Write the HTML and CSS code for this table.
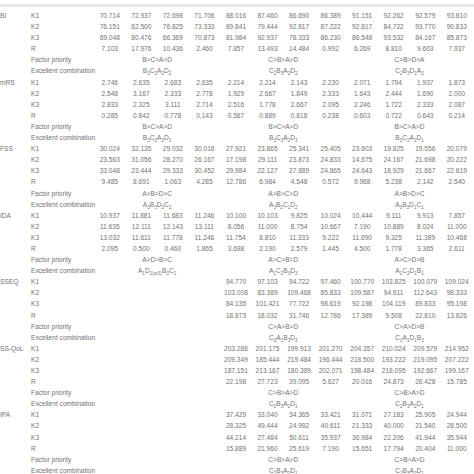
FILE: index.html
```html
<!DOCTYPE html>
<html lang="en">
<head>
<meta charset="utf-8">
<title>Orthogonal analysis table</title>
<link rel="stylesheet" href="styles.css">
</head>
<body>
<div class="sheet">
  <div class="rule"></div>
  <div class="tbl">
    <div class="row"><span class="lab">BI</span><span class="fac">K1</span><span>70.714</span><span>72.937</span><span>72.698</span><span>71.706</span><span>88.016</span><span>87.460</span><span>86.690</span><span>86.389</span><span>91.151</span><span>92.262</span><span>92.579</span><span>93.810</span></div>
    <div class="row"><span class="lab"></span><span class="fac">K2</span><span>76.151</span><span>62.500</span><span>76.825</span><span>73.333</span><span>89.841</span><span>79.444</span><span>92.817</span><span>87.222</span><span>92.817</span><span>84.722</span><span>93.770</span><span>90.833</span></div>
    <div class="row"><span class="lab"></span><span class="fac">K3</span><span>69.048</span><span>80.476</span><span>66.369</span><span>70.873</span><span>81.984</span><span>92.937</span><span>78.333</span><span>86.230</span><span>86.548</span><span>93.532</span><span>84.167</span><span>85.873</span></div>
    <div class="row"><span class="lab"></span><span class="fac">R</span><span>7.103</span><span>17.976</span><span>10.436</span><span>2.460</span><span>7.857</span><span>13.493</span><span>14.484</span><span>0.992</span><span>6.269</span><span>8.810</span><span>9.603</span><span>7.937</span></div>
    <div class="row"><span class="lab"></span><span class="fac">Factor priority</span><span class="g">B&gt;C&gt;A&gt;D</span><span class="g">C&gt;B&gt;A&gt;D</span><span class="g">C&gt;B&gt;D&gt;A</span></div>
    <div class="row"><span class="lab"></span><span class="fac">Excellent combination</span><span class="g">B<sub>3</sub>C<sub>2</sub>A<sub>2</sub>D<sub>2</sub></span><span class="g">C<sub>2</sub>B<sub>3</sub>A<sub>2</sub>D<sub>2</sub></span><span class="g">C<sub>2</sub>B<sub>3</sub>D<sub>1</sub>A<sub>2</sub></span></div>

    <div class="row"><span class="lab">mRS</span><span class="fac">K1</span><span>2.746</span><span>2.635</span><span>2.683</span><span>2.635</span><span>2.214</span><span>2.214</span><span>2.143</span><span>2.230</span><span>2.071</span><span>1.794</span><span>1.937</span><span>1.873</span></div>
    <div class="row"><span class="lab"></span><span class="fac">K2</span><span>2.548</span><span>3.167</span><span>2.333</span><span>2.778</span><span>1.929</span><span>2.667</span><span>1.849</span><span>2.333</span><span>1.643</span><span>2.444</span><span>1.690</span><span>2.000</span></div>
    <div class="row"><span class="lab"></span><span class="fac">K3</span><span>2.833</span><span>2.325</span><span>3.111</span><span>2.714</span><span>2.516</span><span>1.778</span><span>2.667</span><span>2.095</span><span>2.246</span><span>1.722</span><span>2.333</span><span>2.087</span></div>
    <div class="row"><span class="lab"></span><span class="fac">R</span><span>0.285</span><span>0.842</span><span>0.778</span><span>0.143</span><span>0.587</span><span>0.889</span><span>0.818</span><span>0.238</span><span>0.603</span><span>0.722</span><span>0.643</span><span>0.214</span></div>
    <div class="row"><span class="lab"></span><span class="fac">Factor priority</span><span class="g">B&gt;C&gt;A&gt;D</span><span class="g">B&gt;C&gt;A&gt;D</span><span class="g">B&gt;C&gt;A&gt;D</span></div>
    <div class="row"><span class="lab"></span><span class="fac">Excellent combination</span><span class="g">B<sub>3</sub>C<sub>2</sub>A<sub>2</sub>D<sub>1</sub></span><span class="g">B<sub>3</sub>C<sub>2</sub>A<sub>2</sub>D<sub>3</sub></span><span class="g">B<sub>3</sub>C<sub>2</sub>A<sub>2</sub>D<sub>1</sub></span></div>

    <div class="row"><span class="lab">FSS</span><span class="fac">K1</span><span>30.024</span><span>32.135</span><span>29.032</span><span>30.016</span><span>27.921</span><span>23.865</span><span>25.341</span><span>25.405</span><span>23.603</span><span>19.825</span><span>19.556</span><span>20.079</span></div>
    <div class="row"><span class="lab"></span><span class="fac">K2</span><span>23.563</span><span>31.056</span><span>28.270</span><span>26.167</span><span>17.198</span><span>29.111</span><span>23.873</span><span>24.833</span><span>14.675</span><span>24.167</span><span>21.698</span><span>20.222</span></div>
    <div class="row"><span class="lab"></span><span class="fac">K3</span><span>33.048</span><span>23.444</span><span>29.333</span><span>30.452</span><span>29.984</span><span>22.127</span><span>27.889</span><span>24.865</span><span>24.643</span><span>18.929</span><span>21.667</span><span>22.619</span></div>
    <div class="row"><span class="lab"></span><span class="fac">R</span><span>9.485</span><span>8.691</span><span>1.063</span><span>4.285</span><span>12.786</span><span>6.984</span><span>4.548</span><span>0.572</span><span>9.968</span><span>5.238</span><span>2.142</span><span>2.540</span></div>
    <div class="row"><span class="lab"></span><span class="fac">Factor priority</span><span class="g">A&gt;B&gt;D&gt;C</span><span class="g">A&gt;B&gt;C&gt;D</span><span class="g">A&gt;B&gt;D&gt;C</span></div>
    <div class="row"><span class="lab"></span><span class="fac">Excellent combination</span><span class="g">A<sub>3</sub>B<sub>3</sub>D<sub>2</sub>C<sub>2</sub></span><span class="g">A<sub>3</sub>B<sub>2</sub>C<sub>1</sub>D<sub>2</sub></span><span class="g">A<sub>3</sub>B<sub>3</sub>D<sub>1</sub>C<sub>1</sub></span></div>

    <div class="row"><span class="lab">IDA</span><span class="fac">K1</span><span>10.937</span><span>11.881</span><span>11.683</span><span>11.246</span><span>10.100</span><span>10.103</span><span>9.825</span><span>10.024</span><span>10.444</span><span>9.111</span><span>9.913</span><span>7.857</span></div>
    <div class="row"><span class="lab"></span><span class="fac">K2</span><span>11.635</span><span>12.111</span><span>12.143</span><span>13.111</span><span>8.056</span><span>11.000</span><span>8.754</span><span>10.667</span><span>7.190</span><span>10.889</span><span>8.024</span><span>11.000</span></div>
    <div class="row"><span class="lab"></span><span class="fac">K3</span><span>13.032</span><span>11.611</span><span>11.778</span><span>11.246</span><span>11.754</span><span>8.810</span><span>11.333</span><span>9.222</span><span>11.690</span><span>9.325</span><span>11.389</span><span>10.468</span></div>
    <div class="row"><span class="lab"></span><span class="fac">R</span><span>2.095</span><span>0.500</span><span>0.460</span><span>1.865</span><span>3.698</span><span>2.190</span><span>2.579</span><span>1.445</span><span>4.500</span><span>1.778</span><span>3.365</span><span>2.611</span></div>
    <div class="row"><span class="lab"></span><span class="fac">Factor priority</span><span class="g">A&gt;D&gt;B&gt;C</span><span class="g">A&gt;C&gt;B=D</span><span class="g">A&gt;C&gt;D&gt;B</span></div>
    <div class="row"><span class="lab"></span><span class="fac">Excellent combination</span><span class="g">A<sub>1</sub>D<sub>1(or3)</sub>B<sub>3</sub>C<sub>1</sub></span><span class="g">A<sub>1</sub>C<sub>2</sub>B<sub>3</sub>D<sub>3</sub></span><span class="g">A<sub>1</sub>C<sub>2</sub>D<sub>1</sub>B<sub>1</sub></span></div>

    <div class="row"><span class="lab">SSEQ</span><span class="fac">K1</span><span class="c5">94.770</span><span>97.103</span><span>94.722</span><span>97.460</span><span>100.770</span><span>103.825</span><span>100.079</span><span>109.024</span></div>
    <div class="row"><span class="lab"></span><span class="fac">K2</span><span class="c5">103.008</span><span>83.389</span><span>109.468</span><span>85.833</span><span>109.587</span><span>94.611</span><span>112.643</span><span>98.333</span></div>
    <div class="row"><span class="lab"></span><span class="fac">K3</span><span class="c5">84.135</span><span>101.421</span><span>77.722</span><span>98.619</span><span>92.198</span><span>104.119</span><span>89.833</span><span>95.198</span></div>
    <div class="row"><span class="lab"></span><span class="fac">R</span><span class="c5">18.873</span><span>18.032</span><span>31.746</span><span>12.786</span><span>17.389</span><span>9.508</span><span>22.810</span><span>13.826</span></div>
    <div class="row"><span class="lab"></span><span class="fac">Factor priority</span><span class="g c5">C&gt;A&gt;B&gt;D</span><span class="g">C&gt;A&gt;D&gt;B</span></div>
    <div class="row"><span class="lab"></span><span class="fac">Excellent combination</span><span class="g c5">C<sub>2</sub>A<sub>1</sub>B<sub>3</sub>D<sub>3</sub></span><span class="g">C<sub>2</sub>A<sub>1</sub>D<sub>1</sub>B<sub>3</sub></span></div>

    <div class="row"><span class="lab">SS-QoL</span><span class="fac">K1</span><span class="c5">203.286</span><span>201.175</span><span>199.913</span><span>201.270</span><span>204.357</span><span>210.024</span><span>209.579</span><span>214.952</span></div>
    <div class="row"><span class="lab"></span><span class="fac">K2</span><span class="c5">209.349</span><span>185.444</span><span>219.484</span><span>196.444</span><span>218.500</span><span>193.222</span><span>219.095</span><span>207.222</span></div>
    <div class="row"><span class="lab"></span><span class="fac">K3</span><span class="c5">187.151</span><span>213.167</span><span>180.389</span><span>202.071</span><span>198.484</span><span>218.095</span><span>192.667</span><span>199.167</span></div>
    <div class="row"><span class="lab"></span><span class="fac">R</span><span class="c5">22.198</span><span>27.723</span><span>39.095</span><span>5.627</span><span>20.016</span><span>24.873</span><span>26.428</span><span>15.785</span></div>
    <div class="row"><span class="lab"></span><span class="fac">Factor priority</span><span class="g c5">C&gt;B&gt;A&gt;D</span><span class="g">C&gt;B&gt;A&gt;D</span></div>
    <div class="row"><span class="lab"></span><span class="fac">Excellent combination</span><span class="g c5">C<sub>2</sub>B<sub>3</sub>A<sub>2</sub>D<sub>1</sub></span><span class="g">C<sub>2</sub>B<sub>3</sub>A<sub>2</sub>D<sub>1</sub></span></div>

    <div class="row"><span class="lab">IPA</span><span class="fac">K1</span><span class="c5">37.429</span><span>33.040</span><span>34.365</span><span>33.421</span><span>31.071</span><span>27.183</span><span>25.905</span><span>24.944</span></div>
    <div class="row"><span class="lab"></span><span class="fac">K2</span><span class="c5">28.325</span><span>49.444</span><span>24.992</span><span>40.611</span><span>21.333</span><span>40.000</span><span>21.540</span><span>28.500</span></div>
    <div class="row"><span class="lab"></span><span class="fac">K3</span><span class="c5">44.214</span><span>27.484</span><span>50.611</span><span>35.937</span><span>36.984</span><span>22.206</span><span>41.944</span><span>35.944</span></div>
    <div class="row"><span class="lab"></span><span class="fac">R</span><span class="c5">15.889</span><span>21.960</span><span>25.619</span><span>7.190</span><span>15.651</span><span>17.794</span><span>20.404</span><span>11.000</span></div>
    <div class="row"><span class="lab"></span><span class="fac">Factor priority</span><span class="g c5">C&gt;B&gt;A&gt;D</span><span class="g">C&gt;B&gt;A&gt;D</span></div>
    <div class="row"><span class="lab"></span><span class="fac">Excellent combination</span><span class="g c5">C<sub>2</sub>B<sub>3</sub>A<sub>2</sub>D<sub>1</sub></span><span class="g">C<sub>2</sub>B<sub>3</sub>A<sub>2</sub>D<sub>1</sub></span></div>
  </div>
</div>
</body>
</html>
```

FILE: styles.css
```css
html, body {
  margin: 0;
  padding: 0;
  background: #ffffff;
}

body {
  font-family: "Liberation Sans", Arial, sans-serif;
  font-size: 6.6px;
  color: #737373;
}

.sheet {
  width: 474px;
  height: 474px;
  overflow: hidden;
}

.rule {
  height: 3px;
  background: #e6e6e6;
  margin-top: 4px;
  margin-bottom: 3px;
}

.tbl {
  display: flex;
  flex-direction: column;
}

.row {
  display: grid;
  grid-template-columns: 31px 63px repeat(12, 31.55px);
  height: 11.1px;
  line-height: 11.1px;
  white-space: nowrap;
}

.row > span {
  text-align: center;
}

.row > .lab,
.row > .fac {
  text-align: left;
}

.row > .g {
  grid-column: span 4;
}

.row > .c5 {
  grid-column-start: 7;
}

.row > .g.c5 {
  grid-column: 7 / span 4;
}

sub {
  font-size: 4.6px;
  line-height: 0;
  vertical-align: -1.6px;
}
```
